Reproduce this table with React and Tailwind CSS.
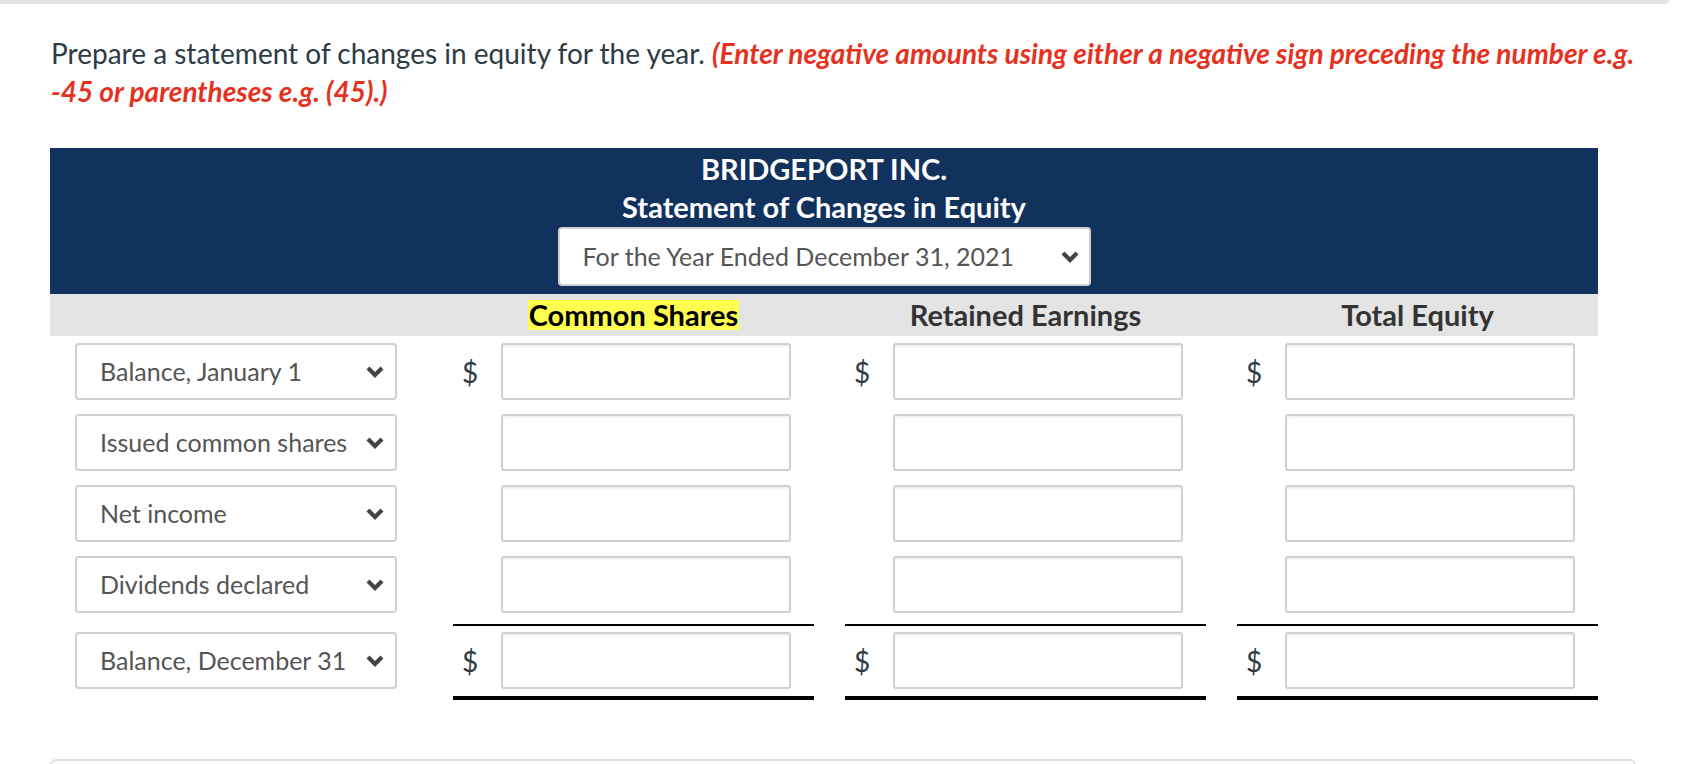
import React from "react";

function Chevron({ className = "" }) {
  return (
    <svg width="20" height="13" viewBox="0 0 20 13" className={className}>
      <polyline points="3,3 10,10 17,3" fill="none" stroke="#444" strokeWidth="4.2" strokeLinejoin="miter" strokeLinecap="butt" />
    </svg>
  );
}

function LabelSelect({ label }) {
  return (
    <div className="ml-[25px] w-[322px] h-[57px] border-2 border-[#d0d0d0] rounded-[4px] bg-white flex items-center justify-between pl-[23px] pr-[10px]">
      <span className="text-[25px] text-[#555] whitespace-nowrap">{label}</span>
      <Chevron />
    </div>
  );
}

function NumInput() {
  return (
    <input
      type="text"
      className="w-[290px] h-[57px] border-2 border-[#d0d0d0] rounded-[3px] bg-white shadow-[inset_0_2px_2px_rgba(0,0,0,0.06)] outline-none"
    />
  );
}

function NumCell({ dollar, last }) {
  if (last) {
    return (
      <div className="ml-[31px] mt-[4px] border-t-2 border-b-4 border-black pt-[6px] pb-[7px] flex items-center">
        <div className="w-[48px] pl-[9px] text-[28px] text-[#2d3b45] leading-none">$</div>
        <NumInput />
      </div>
    );
  }
  return (
    <div className="ml-[31px] flex items-center">
      <div className="w-[48px] pl-[9px] text-[28px] text-[#2d3b45] leading-none">{dollar ? "$" : ""}</div>
      <NumInput />
    </div>
  );
}

const rows = [
  { label: "Balance, January 1", dollar: true },
  { label: "Issued common shares", dollar: false },
  { label: "Net income", dollar: false },
  { label: "Dividends declared", dollar: false },
];

export default function App() {
  return (
    <div className="w-[1690px] h-[764px] bg-white overflow-hidden font-['Lato',sans-serif]">
      <div className="h-[4px] w-[1669px] bg-[#e4e4e4] rounded-br-[4px]" />
      <p className="mt-[30px] ml-[51px] w-[1600px] text-[28px] leading-[38px] text-[#2d3b45]">
        Prepare a statement of changes in equity for the year.{" "}
        <span className="italic font-bold text-[#e5321f]">
          (Enter negative amounts using either a negative sign preceding the number e.g. -45 or parentheses e.g. (45).)
        </span>
      </p>

      <div className="ml-[50px] mt-[38px] w-[1548px]">
        <div className="h-[146px] bg-[#12325e] flex flex-col items-center pt-[2px]">
          <div className="text-[29px] leading-[38px] font-bold text-white">BRIDGEPORT INC.</div>
          <div className="text-[29px] leading-[38px] font-bold text-white">Statement of Changes in Equity</div>
          <div className="mt-[1px] w-[533px] h-[59px] bg-white border-2 border-[#cfcfcf] rounded-[4px] flex items-center justify-between pl-[23px] pr-[9px]">
            <span className="text-[25px] text-[#555]">For the Year Ended December 31, 2021</span>
            <Chevron />
          </div>
        </div>

        <div className="h-[42px] bg-[#e4e4e4] grid grid-cols-[372px_392px_392px_392px] items-center">
          <div />
          <div className="pl-[31px] flex justify-center">
            <span className="bg-[#ffff4f] text-black font-bold text-[29px] leading-[30px] px-[1px]">Common Shares</span>
          </div>
          <div className="pl-[31px] flex justify-center">
            <span className="text-[#333] font-bold text-[29px] leading-[30px]">Retained Earnings</span>
          </div>
          <div className="pl-[31px] flex justify-center">
            <span className="text-[#333] font-bold text-[29px] leading-[30px]">Total Equity</span>
          </div>
        </div>

        {rows.map((r) => (
          <div key={r.label} className="h-[71px] pt-[7px] grid grid-cols-[372px_392px_392px_392px] items-start">
            <LabelSelect label={r.label} />
            <NumCell dollar={r.dollar} />
            <NumCell dollar={r.dollar} />
            <NumCell dollar={r.dollar} />
          </div>
        ))}

        <div className="grid grid-cols-[372px_392px_392px_392px] items-start">
          <div className="pt-[12px]">
            <LabelSelect label="Balance, December 31" />
          </div>
          <NumCell last />
          <NumCell last />
          <NumCell last />
        </div>
      </div>

      <div className="ml-[50px] mt-[59px] w-[1586px] h-[30px] border-2 border-[#e2e2e2] rounded-[6px] bg-[#fafafa]" />
    </div>
  );
}
